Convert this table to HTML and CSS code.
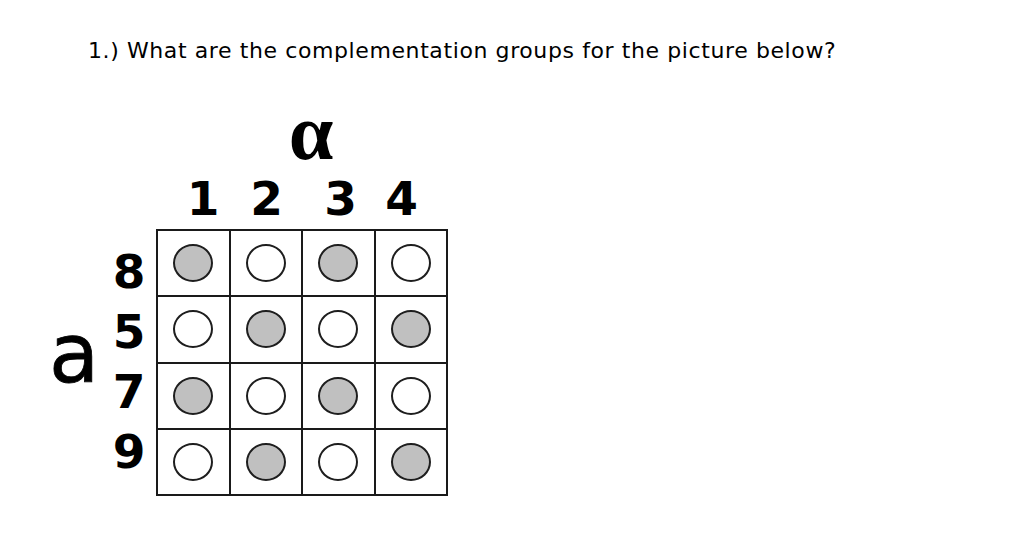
FILE: index.html
```html
<!DOCTYPE html>
<html>
<head>
<meta charset="utf-8">
<link rel="stylesheet" href="styles.css">
</head>
<body>
<h1 class="question">1.) What are the complementation groups for the picture below?</h1>
<div class="figure">
  <div class="figure-head">
    <div class="alpha">α</div>
    <div class="col-labels">
      <span class="col-label c1">1</span>
      <span class="col-label c2">2</span>
      <span class="col-label c3">3</span>
      <span class="col-label c4">4</span>
    </div>
  </div>
  <div class="figure-body">
    <div class="big-a">a</div>
    <div class="row-labels">
      <div class="row-label">8</div>
      <div class="row-label">5</div>
      <div class="row-label">7</div>
      <div class="row-label">9</div>
    </div>
    <div class="grid">
      <div class="cell"><span class="dot filled"></span></div>
      <div class="cell"><span class="dot"></span></div>
      <div class="cell"><span class="dot filled"></span></div>
      <div class="cell"><span class="dot"></span></div>
      <div class="cell"><span class="dot"></span></div>
      <div class="cell"><span class="dot filled"></span></div>
      <div class="cell"><span class="dot"></span></div>
      <div class="cell"><span class="dot filled"></span></div>
      <div class="cell"><span class="dot filled"></span></div>
      <div class="cell"><span class="dot"></span></div>
      <div class="cell"><span class="dot filled"></span></div>
      <div class="cell"><span class="dot"></span></div>
      <div class="cell"><span class="dot"></span></div>
      <div class="cell"><span class="dot filled"></span></div>
      <div class="cell"><span class="dot"></span></div>
      <div class="cell"><span class="dot filled"></span></div>
    </div>
  </div>
</div>
</body>
</html>
```
FILE: styles.css
```css
html, body {
  margin: 0;
  padding: 0;
  background: #ffffff;
  color: #000000;
}
.question {
  margin: 0;
  padding: 38px 0 0 88px;
  font-family: "DejaVu Sans", sans-serif;
  font-weight: normal;
  font-size: 22px;
  line-height: 25px;
  letter-spacing: 0.6px;
  color: #000000;
  white-space: nowrap;
}
.figure-head {
  margin-left: 156px;
  width: 292px;
}
.alpha {
  margin-top: 29px;
  padding-left: 18px;
  text-align: center;
  font-family: "Liberation Serif", serif;
  font-weight: bold;
  font-size: 80px;
  line-height: 80px;
}
.col-labels {
  display: flex;
  margin-top: 2px;
  font-family: "DejaVu Sans", sans-serif;
  font-weight: bold;
  font-size: 47px;
  line-height: 50px;
}
.col-label {
  width: 40px;
  text-align: center;
}
.c1 { margin-left: 27px; }
.c2 { margin-left: 23.5px; }
.c3 { margin-left: 34px; }
.c4 { margin-left: 21px; }
.figure-body {
  display: flex;
  align-items: flex-start;
  margin-top: 5px;
  padding-left: 44px;
}
.big-a {
  width: 60px;
  margin-top: 84px;
  margin-right: 5px;
  text-align: center;
  font-family: "DejaVu Sans", sans-serif;
  font-size: 82px;
  line-height: 82px;
  -webkit-text-stroke: 0.8px #000000;
}
.row-labels {
  width: 40px;
  margin-top: 13px;
  margin-right: 7px;
  font-family: "DejaVu Sans", sans-serif;
  font-weight: bold;
  font-size: 47px;
  line-height: 60px;
  text-align: center;
}
.grid {
  display: grid;
  grid-template-columns: repeat(4, 72.5px);
  grid-template-rows: repeat(4, 66.25px);
  border-left: 2px solid #1a1a1a;
  border-top: 2px solid #1a1a1a;
}
.cell {
  box-sizing: border-box;
  border-right: 2px solid #1a1a1a;
  border-bottom: 2px solid #1a1a1a;
  display: flex;
  align-items: center;
  justify-content: center;
}
.dot {
  box-sizing: border-box;
  width: 40px;
  height: 38px;
  border: 2px solid #1e1e1e;
  border-radius: 50%;
  background: #ffffff;
}
.dot.filled {
  background: #c0c0c0;
}
```
